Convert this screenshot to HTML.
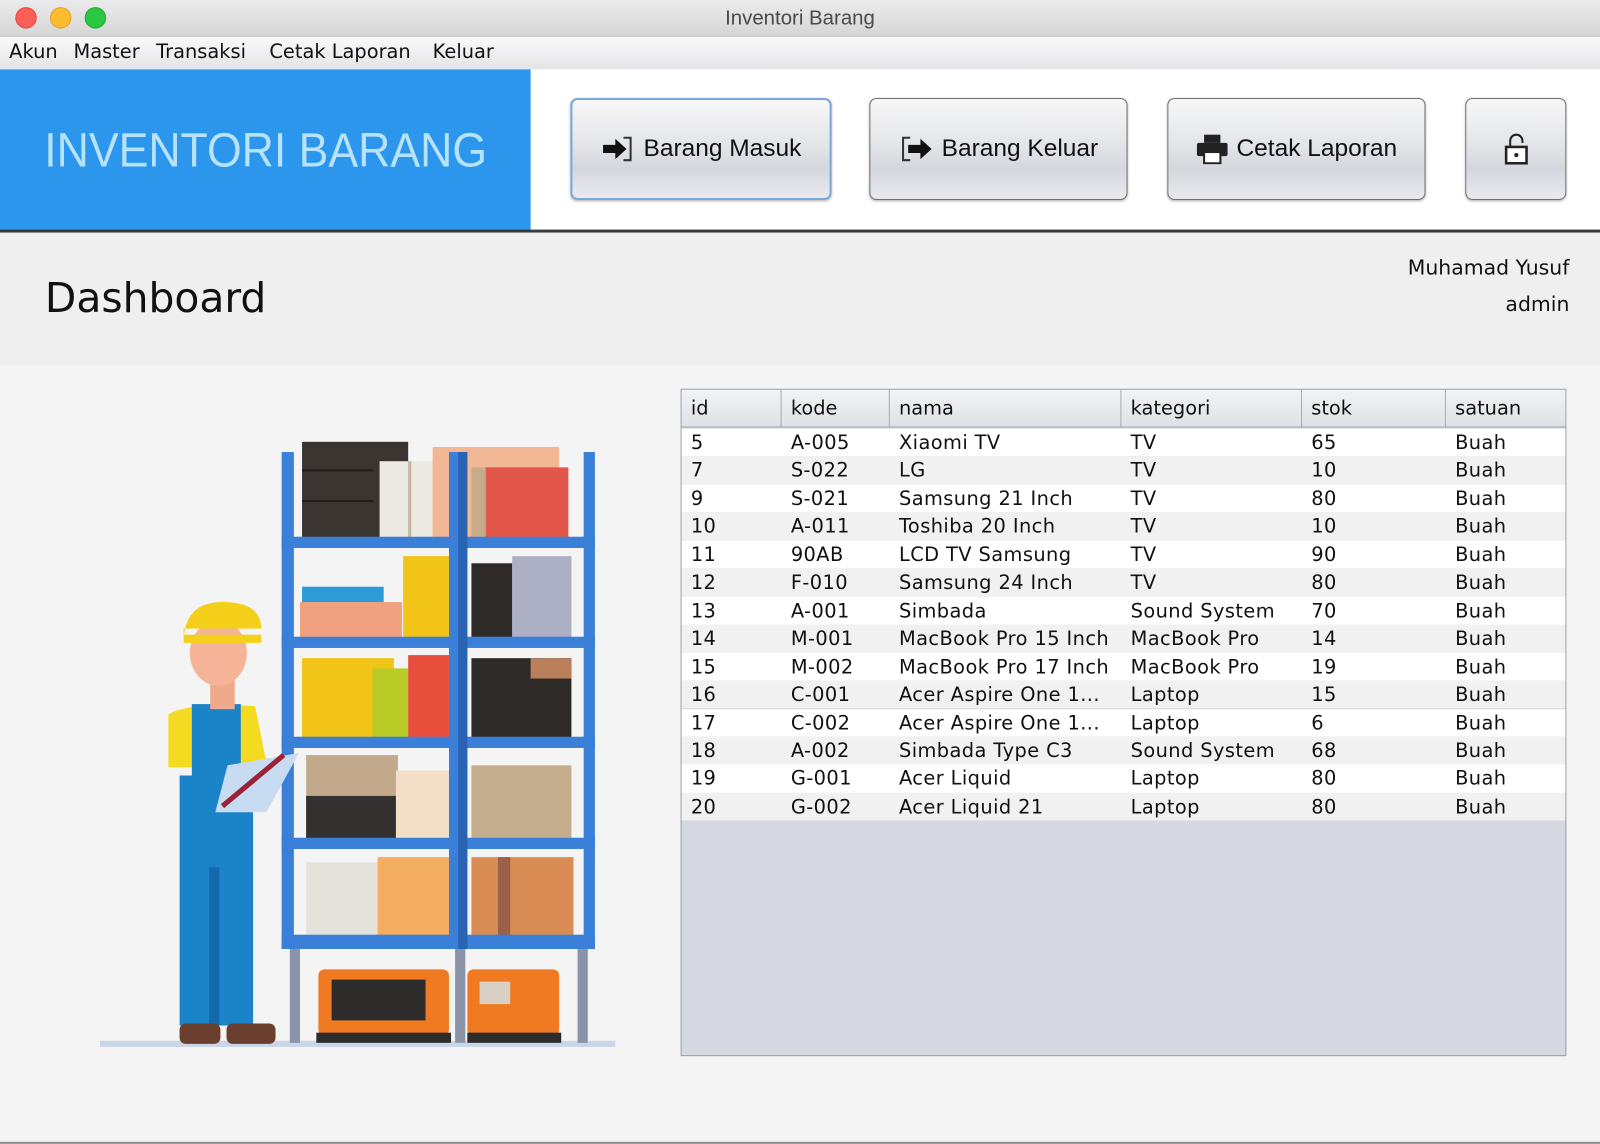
<!DOCTYPE html>
<html><head><meta charset="utf-8"><style>
*{margin:0;padding:0;box-sizing:border-box}
body{width:1600px;height:1144px;overflow:hidden;background:#f4f4f4;font-family:"Liberation Sans",sans-serif}
#r{position:absolute;left:0;top:0;width:1568px;height:1121px;transform:scale(1.020408);transform-origin:0 0;background:#f4f4f4}
.tb{position:absolute;left:0;top:0;width:1568px;height:36px;background:linear-gradient(#ebebeb,#d6d6d6);border-bottom:1px solid #b8b8b8;text-align:center;font-size:20px;line-height:36px;color:#4a4a4a}
.dot{position:absolute;top:7px;width:21px;height:21px;border-radius:50%}
.mb{position:absolute;left:0;top:36px;width:1568px;height:32px;background:linear-gradient(#fafafa,#e4e4e8);font-size:19px;line-height:30px;color:#111;font-family:"DejaVu Sans",sans-serif}
.mb span{position:absolute;top:0;white-space:nowrap}
.hd{position:absolute;left:0;top:68px;width:1568px;height:158px;background:#fff}
.blue{position:absolute;left:0;top:68px;width:520px;height:158px;background:#2b96ec;color:#b6e3fb;font-size:47px;line-height:158px;text-align:center}
.line{position:absolute;left:0;top:225px;width:1568px;height:3px;background:#3a3a3a}
.btn{position:absolute;top:96px;height:100px;border:1px solid #6f6f6f;border-radius:7px;background:linear-gradient(#f7f7f7 0%,#e4e5e8 45%,#d5d7de 70%,#e9eaee 100%);font-size:24px;color:#111;display:flex;align-items:center;justify-content:center;gap:8px;box-shadow:0 1px 2px rgba(0,0,0,.25)}
.dash{position:absolute;left:0;top:228px;width:1568px;height:130px;background:#efefef}
.tbl{position:absolute;left:667px;top:381px;width:868px;height:654px;border:1px solid #9b9ea6;background:#d6d9e1}
.th{position:absolute;left:0;top:0;width:866px;height:37px;background:linear-gradient(#f2f3f5,#dfe1e6);border-bottom:1px solid #a0a3aa}
.th div,.row div{position:absolute;top:0;font-family:"DejaVu Sans",sans-serif;font-size:19px;color:#111}
.th div{line-height:36px;height:36px;border-right:1px solid #a8abb2;padding-left:9px}
.row{position:absolute;left:0;width:866px;height:27.45px}
.row div{line-height:29px;padding-left:9px;letter-spacing:.4px}
</style></head><body><div id="r">
<div class="tb">Inventori Barang
<div class="dot" style="left:15px;background:#fc5f57;border:1px solid #de4a42"></div>
<div class="dot" style="left:49px;background:#fdbc2e;border:1px solid #de9f22"></div>
<div class="dot" style="left:83px;background:#29c840;border:1px solid #1ea932"></div></div>
<div class="mb"><span style="left:9px">Akun</span><span style="left:72px">Master</span><span style="left:153px">Transaksi</span><span style="left:264px">Cetak Laporan</span><span style="left:424px">Keluar</span></div>
<div class="hd"></div>
<div class="blue"><span style="display:inline-block;transform:scaleX(.93)">INVENTORI BARANG</span></div>
<div class="line"></div>
<div class="btn" style="left:559px;width:256px;border:2px solid #7ba7d8">
<svg width="34" height="26" viewBox="0 0 34 26"><path d="M2 9h12V3l11 10-11 10v-6H2z" fill="#111"/><path d="M22 2h7v22h-7" fill="none" stroke="#333" stroke-width="2"/></svg>Barang Masuk</div>
<div class="btn" style="left:852px;width:253px">
<svg width="34" height="26" viewBox="0 0 34 26"><path d="M11 2H4v22h7" fill="none" stroke="#333" stroke-width="2"/><path d="M9 9h12V3l11 10-11 10v-6H9z" fill="#111"/></svg>Barang Keluar</div>
<div class="btn" style="left:1144px;width:253px">
<svg width="32" height="30" viewBox="0 0 32 30"><rect x="8" y="1" width="16" height="8" fill="#222"/><rect x="1" y="9" width="30" height="13" rx="2" fill="#222"/><rect x="8" y="18" width="16" height="11" fill="#fff" stroke="#222" stroke-width="2"/></svg>Cetak Laporan</div>
<div class="btn" style="left:1436px;width:99px">
<svg width="26" height="32" viewBox="0 0 26 32"><path d="M7 14V8a6 6 0 0 1 12 0v2" fill="none" stroke="#222" stroke-width="2"/><rect x="3" y="14" width="20" height="16" fill="#fff" stroke="#222" stroke-width="2.5"/><circle cx="13" cy="22" r="2" fill="#222"/></svg></div>
<div class="dash"></div>
<div style="position:absolute;left:44px;top:270px;font-size:40px;color:#111;font-family:'DejaVu Sans',sans-serif">Dashboard</div>
<div style="position:absolute;right:30px;top:244px;font-size:20px;color:#111;text-align:right;line-height:36px;font-family:'DejaVu Sans',sans-serif">Muhamad Yusuf<br>admin</div>

<svg style="position:absolute;left:90px;top:425px" width="520" height="610" viewBox="90 425 520 610">
<rect x="98" y="1020" width="505" height="6" fill="#c9d6e8"/>
<rect x="296" y="433" width="104" height="95" fill="#3b3532"/><rect x="296" y="460" width="70" height="2" fill="#221e1c"/><rect x="296" y="490" width="70" height="2" fill="#221e1c"/>
<rect x="372" y="452" width="66" height="76" fill="#ece9e2"/><rect x="400" y="452" width="3" height="76" fill="#c5b79e"/>
<rect x="424" y="438" width="124" height="90" fill="#f2b795"/><rect x="475" y="458" width="82" height="70" fill="#e3574b"/><rect x="462" y="458" width="14" height="70" fill="#c7ac8c"/>
<rect x="296" y="575" width="80" height="50" fill="#2d9cd6"/><rect x="294" y="590" width="100" height="35" fill="#f0a280"/><rect x="395" y="545" width="45" height="80" fill="#f2c417"/>
<rect x="462" y="552" width="40" height="73" fill="#2e2a28"/><rect x="502" y="545" width="58" height="80" fill="#adafc4"/>
<rect x="296" y="645" width="90" height="78" fill="#f2c417"/><rect x="365" y="655" width="35" height="68" fill="#b9cc25"/><rect x="400" y="642" width="40" height="81" fill="#e84f3c"/>
<rect x="462" y="645" width="98" height="78" fill="#2e2a28"/><rect x="520" y="645" width="40" height="20" fill="#b9805b"/>
<rect x="300" y="740" width="90" height="82" fill="#c2a98c"/><rect x="300" y="780" width="90" height="42" fill="#353030"/><rect x="388" y="755" width="52" height="67" fill="#f3dfc5"/>
<rect x="462" y="750" width="98" height="72" fill="#c4ad8c"/>
<rect x="300" y="845" width="70" height="72" fill="#e3e3dc"/><rect x="370" y="840" width="70" height="77" fill="#f3ae62"/>
<rect x="462" y="840" width="100" height="77" fill="#d98c54"/><rect x="488" y="840" width="12" height="77" fill="#9a6048"/>
<g fill="#3a7fd8">
<rect x="276" y="443" width="12" height="487"/><rect x="440" y="443" width="18" height="487"/><rect x="572" y="443" width="11" height="487"/>
<rect x="276" y="526" width="307" height="11"/><rect x="276" y="624" width="307" height="11"/><rect x="276" y="722" width="307" height="11"/><rect x="276" y="821" width="307" height="11"/><rect x="276" y="916" width="307" height="14"/>
</g>
<rect x="449" y="443" width="9" height="487" fill="#2a62b4"/>
<g fill="#8a93a8"><rect x="284" y="930" width="10" height="92"/><rect x="446" y="930" width="10" height="92"/><rect x="566" y="930" width="10" height="92"/></g>
<rect x="312" y="950" width="128" height="65" rx="6" fill="#f07a22"/><rect x="325" y="960" width="92" height="40" fill="#2e2b2b"/><rect x="310" y="1012" width="132" height="10" fill="#2e2b2b"/>
<rect x="458" y="950" width="90" height="65" rx="6" fill="#f07a22"/><rect x="470" y="962" width="30" height="22" fill="#d8d0c4"/><rect x="458" y="1012" width="92" height="10" fill="#2e2b2b"/>
<rect x="176" y="760" width="72" height="245" fill="#1b83c8"/><rect x="205" y="850" width="10" height="155" fill="#1468ac"/>
<path d="M165 700q20-12 85-8l12 60h-97z" fill="#f5da22"/>
<rect x="188" y="690" width="48" height="80" fill="#1b83c8"/>
<rect x="206" y="655" width="24" height="40" fill="#f0a98a"/>
<ellipse cx="214" cy="640" rx="28" ry="32" fill="#f5b497"/>
<path d="M180 630q0-40 38-40t38 26h-76z" fill="#f4d01a"/><rect x="180" y="622" width="76" height="8" fill="#f4d01a"/>
<path d="M223 750l70-12-32 58-50 0z" fill="#c7dbf2"/><path d="M218 790l60-50" stroke="#9b2336" stroke-width="5"/>
<rect x="176" y="1003" width="40" height="20" rx="6" fill="#6b3f2d"/><rect x="222" y="1003" width="48" height="20" rx="6" fill="#6b3f2d"/>
</svg>

<div class="tbl">
<div class="th"><div style="left:0;width:98px">id</div><div style="left:98px;width:106px">kode</div><div style="left:204px;width:227px">nama</div><div style="left:431px;width:177px">kategori</div><div style="left:608px;width:141px">stok</div><div style="left:749px;width:117px;border-right:none">satuan</div></div>
<div id="rows"></div>
</div>
<div style="position:absolute;left:0;top:1119px;width:1568px;height:2px;background:#8e8e8e"></div>
</div>
<script>
var d=[["5","A-005","Xiaomi TV","TV","65"],["7","S-022","LG","TV","10"],["9","S-021","Samsung 21 Inch","TV","80"],["10","A-011","Toshiba 20 Inch","TV","10"],["11","90AB","LCD TV Samsung","TV","90"],["12","F-010","Samsung 24 Inch","TV","80"],["13","A-001","Simbada","Sound System","70"],["14","M-001","MacBook Pro 15 Inch","MacBook Pro","14"],["15","M-002","MacBook Pro 17 Inch","MacBook Pro","19"],["16","C-001","Acer Aspire One 1...","Laptop","15"],["17","C-002","Acer Aspire One 1...","Laptop","6"],["18","A-002","Simbada Type C3","Sound System","68"],["19","G-001","Acer Liquid","Laptop","80"],["20","G-002","Acer Liquid 21","Laptop","80"]];
var L=[0,98,204,431,608,749],h="";
d.forEach(function(r,i){r.push("Buah");h+='<div class="row" style="top:'+(38+i*27.45)+'px;background:'+(i%2?'#f1f1f1':'#fff')+'">';r.forEach(function(c,j){h+='<div style="left:'+L[j]+'px">'+c+'</div>'});h+='</div>'});
document.getElementById('rows').innerHTML=h;
</script>
</body></html>
